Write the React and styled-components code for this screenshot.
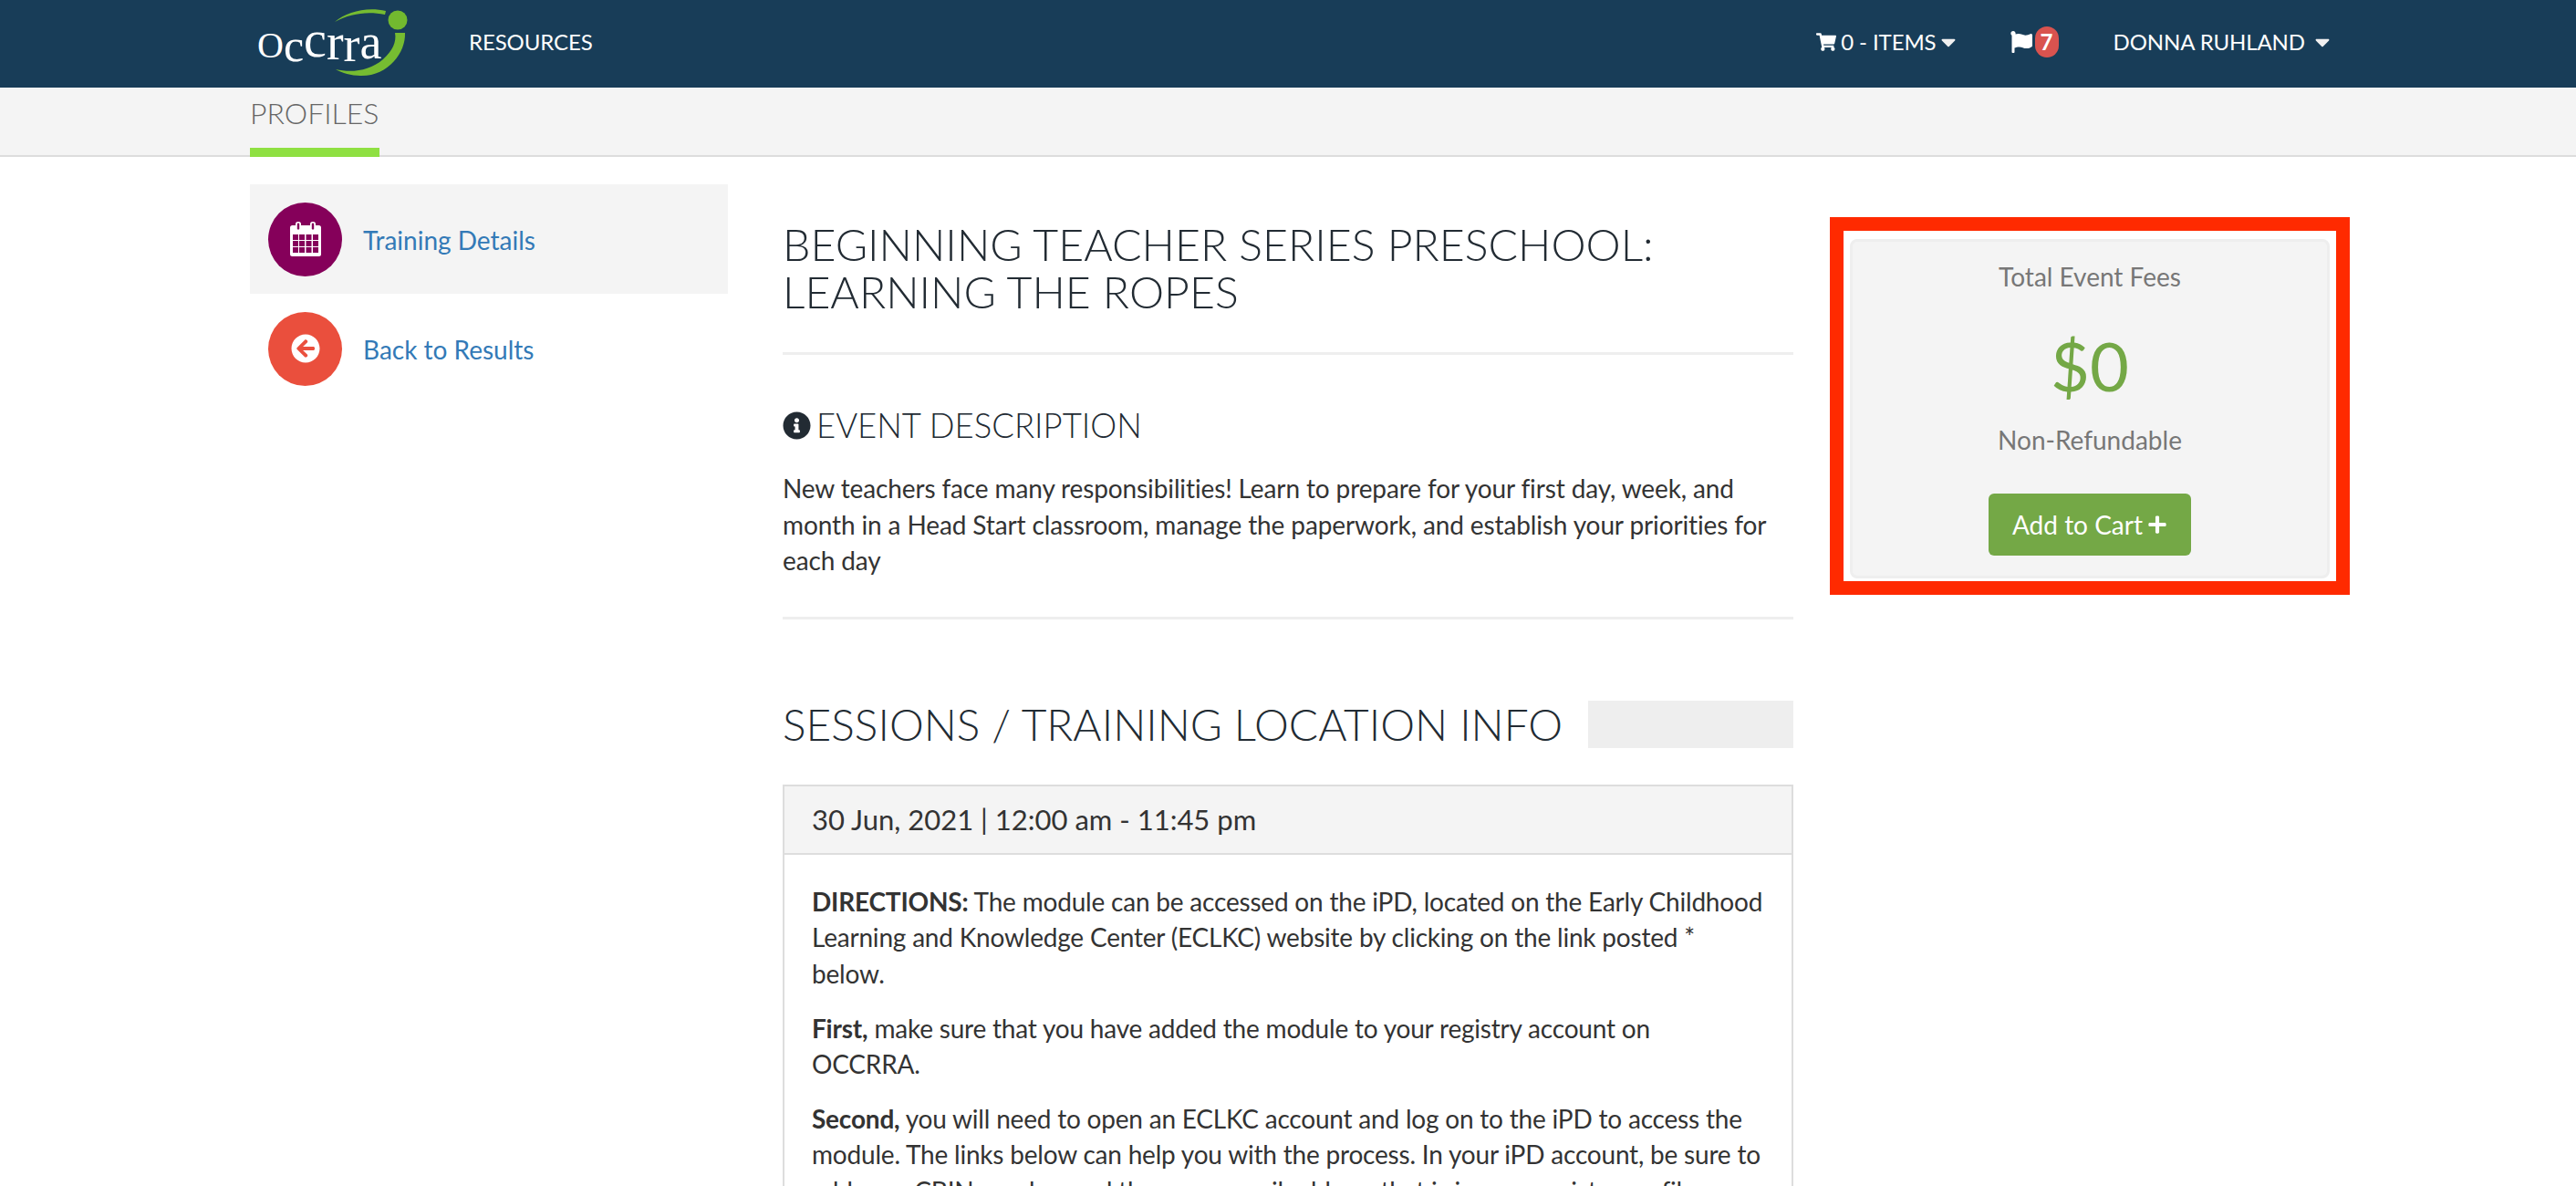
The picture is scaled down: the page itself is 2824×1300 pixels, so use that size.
import styled, { createGlobalStyle } from 'styled-components';
import { FaShoppingCart, FaFlag, FaCaretDown, FaArrowCircleLeft, FaInfoCircle, FaPlus } from 'react-icons/fa';

const GlobalStyle = createGlobalStyle`
  html, body {
    margin: 0;
    background: #fff;
    font-family: Lato, "Open Sans", sans-serif;
    color: #333;
  }
  * { box-sizing: border-box; }
`;

const Page = styled.div`
  height: 1300px;
  overflow: hidden;
`;

const TopBar = styled.header`
  height: 96px;
  background: #183d58;
  color: #fff;
  display: flex;
  align-items: center;
  padding: 0 270px 5px 280px;
`;
const Logo = styled.div`
  position: relative;
  width: 168px;
  height: 80px;
  margin-top: 5px;
  flex: none;
  svg { position: absolute; left: 0; top: 0; }
`;
const LogoText = styled.span`
  position: absolute;
  left: 2px;
  top: 0;
  line-height: 72px;
  white-space: nowrap;
  font-family: "Liberation Serif", serif;
  color: #fff;
`;
const LogoLetter = styled.span`
  display: inline-block;
  font-size: ${(p) => p.$size}px;
  transform: translateY(${(p) => p.$drop}px);
`;
const TopLink = styled.a`
  font-size: 24px;
  letter-spacing: -0.1px;
  color: #fff;
  display: flex;
  align-items: center;
  white-space: nowrap;
`;
const Resources = styled(TopLink)`
  margin-left: 66px;
  margin-right: auto;
`;
const Cart = styled(TopLink)`
  svg { flex: none; }
`;
const CartIcon = styled(FaShoppingCart)`
  margin-right: 5px;
`;
const Caret = styled(FaCaretDown)`
  width: 16px;
  height: 26px;
  margin-left: ${(p) => p.$gap}px;
  color: #f0f0f0;
`;
const Flags = styled.div`
  display: flex;
  align-items: center;
  gap: 3px;
  margin-left: 60px;
`;
const Badge = styled.span`
  width: 26px;
  height: 34px;
  border-radius: 13px;
  background: #d9534f;
  color: #fff;
  font-size: 24px;
  font-weight: 700;
  display: flex;
  align-items: center;
  justify-content: center;
`;
const User = styled(TopLink)`
  margin-left: 60px;
`;

const SubBar = styled.div`
  height: 76px;
  background: #f4f4f4;
  border-bottom: 2px solid #ddd;
  padding-left: 274px;
`;
const SubTab = styled.div`
  width: 142px;
  height: 76px;
  border-bottom: 10px solid #8fe042;
  font-size: 32px;
  font-weight: 300;
  color: #666;
  line-height: 56px;
  white-space: nowrap;
`;

const Layout = styled.div`
  display: flex;
  align-items: flex-start;
  padding: 30px 0 0 274px;
`;
const Sidebar = styled.nav`
  width: 524px;
  flex: none;
`;
const SideItem = styled.a`
  height: 120px;
  display: flex;
  align-items: center;
  gap: 23px;
  padding-left: 20px;
  background: ${(p) => (p.$active ? '#f4f4f4' : 'transparent')};
  color: #337ab7;
  font-size: 28px;
`;
const SideLabel = styled.span`
  padding-top: 2px;
`;
const SideIcon = styled.span`
  width: 81px;
  height: 81px;
  border-radius: 50%;
  background: ${(p) => p.$color};
  color: #fff;
  display: flex;
  align-items: center;
  justify-content: center;
  flex: none;
`;

const Main = styled.main`
  width: 1108px;
  margin-left: 60px;
  flex: none;
`;
const Title = styled.h1`
  margin: 39px 0 0;
  font-size: 48.2px;
  font-weight: 300;
  line-height: 52px;
  color: #222b33;
  padding-bottom: 41px;
  border-bottom: 3px solid #eee;
`;
const SectionTitle = styled.h2`
  margin: 55px 0 0;
  font-size: 36.5px;
  font-weight: 300;
  line-height: 44px;
  color: #222b33;
  display: flex;
  align-items: center;
  gap: 6px;
`;
const Text = styled.p`
  margin: 0 0 20px;
  font-size: 28px;
  line-height: 39.6px;
  letter-spacing: -0.12px;
  color: #333;
`;
const Description = styled(Text)`
  margin: 28px 0 0;
  padding-bottom: 41px;
  border-bottom: 3px solid #eee;
`;
const SessionsRow = styled.div`
  display: flex;
  align-items: center;
  justify-content: space-between;
  margin-top: 89px;
  height: 52px;
`;
const SessionsTitle = styled.h2`
  margin: 0;
  font-size: 47.8px;
  font-weight: 300;
  color: #222b33;
  white-space: nowrap;
`;
const SearchStub = styled.div`
  width: 225px;
  height: 52px;
  background: #eee;
`;
const Panel = styled.section`
  margin-top: 40px;
  border: 2px solid #ddd;
  height: 600px;
`;
const PanelHead = styled.div`
  height: 75px;
  background: #f4f4f4;
  border-bottom: 2px solid #ddd;
  padding-left: 30px;
  display: flex;
  align-items: center;
  font-size: 31px;
  color: #333;
`;
const PanelBody = styled.div`
  padding: 32px 14px 32px 30px;
  ${Text} {
    letter-spacing: -0.2px;
  }
`;

const Summary = styled.div`
  margin-left: 40px;
  margin-top: 36px;
  width: 570px;
  flex: none;
  border: 15px solid #ff2a00;
  padding: 9px 7px 3px;
`;
const SummaryCard = styled.div`
  height: 372px;
  background: #f4f4f4;
  border: 3px solid #eee;
  border-radius: 8px;
  display: flex;
  flex-direction: column;
  align-items: center;
  color: #777;
  font-size: 28px;
`;
const FeeLabel = styled.div`
  margin-top: 18px;
  line-height: 40px;
`;
const Amount = styled.div`
  margin-top: 33px;
  font-size: 74px;
  line-height: 90px;
  color: #74a846;
`;
const FeeNote = styled.div`
  margin-top: 16px;
  line-height: 40px;
`;
const CartButton = styled.button`
  margin-top: 39px;
  width: 222px;
  height: 68px;
  border: 0;
  border-radius: 6px;
  background: #74a846;
  color: #fff;
  font-family: inherit;
  font-size: 28px;
  display: flex;
  align-items: center;
  justify-content: center;
  gap: 5px;
`;

const LogoMark = () => (
  <svg width="168" height="80" viewBox="0 0 168 80">
    <path d="M87 16 C100 5 122 -1 143 4 L142 8 C122 4 104 7 87 16 Z" fill="#76bc31" />
    <circle cx="156" cy="14" r="10.5" fill="#72b92f" />
    <path d="M153 28 L164 28 C165 50 145 76 115 75 C105 75 95 72 88 68 C105 72 125 70 140 57 C150 48 155 38 153 28 Z" fill="#76bc31" />
  </svg>
);

const CalendarIcon = () => (
  <svg width="34" height="38" viewBox="0 0 34 38" fill="#85005a">
    <rect x="0" y="4" width="34" height="34" rx="2.5" fill="#fff" />
    <rect x="6" y="0" width="6" height="10" rx="2.5" fill="#fff" />
    <rect x="22" y="0" width="6" height="10" rx="2.5" fill="#fff" />
    <rect x="7.8" y="1.6" width="2.4" height="7" rx="1.2" />
    <rect x="23.8" y="1.6" width="2.4" height="7" rx="1.2" />
    {[14, 21, 28].map((y) =>
      [3, 10, 17.5, 25].map((x) => <rect key={`${x}-${y}`} x={x} y={y} width="6" height="6" />)
    )}
  </svg>
);

export default function App() {
  return (
    <Page>
      <GlobalStyle />
      <TopBar>
        <Logo>
          <LogoMark />
          <LogoText>
            <LogoLetter $size={40} $drop={0}>O</LogoLetter>
            <LogoLetter $size={50} $drop={4}>c</LogoLetter>
            <LogoLetter $size={56} $drop={-1}>c</LogoLetter>
            <LogoLetter $size={56} $drop={2}>r</LogoLetter>
            <LogoLetter $size={54} $drop={4}>r</LogoLetter>
            <LogoLetter $size={54} $drop={1}>a</LogoLetter>
          </LogoText>
        </Logo>
        <Resources>RESOURCES</Resources>
        <Cart><CartIcon size={22} />0 - ITEMS<Caret $gap={5} /></Cart>
        <Flags><FaFlag size={24} /><Badge>7</Badge></Flags>
        <User>DONNA RUHLAND<Caret $gap={11} /></User>
      </TopBar>
      <SubBar>
        <SubTab>PROFILES</SubTab>
      </SubBar>
      <Layout>
        <Sidebar>
          <SideItem $active>
            <SideIcon $color="#85005a"><CalendarIcon /></SideIcon>
            <SideLabel>Training Details</SideLabel>
          </SideItem>
          <SideItem>
            <SideIcon $color="#ea4f3d"><FaArrowCircleLeft size={32} /></SideIcon>
            <SideLabel>Back to Results</SideLabel>
          </SideItem>
        </Sidebar>
        <Main>
          <Title>BEGINNING TEACHER SERIES PRESCHOOL:<br />LEARNING THE ROPES</Title>
          <SectionTitle><FaInfoCircle size={31} />EVENT DESCRIPTION</SectionTitle>
          <Description>New teachers face many responsibilities! Learn to prepare for your first day, week, and month in a Head Start classroom, manage the paperwork, and establish your priorities for each day</Description>
          <SessionsRow>
            <SessionsTitle>SESSIONS / TRAINING LOCATION INFO</SessionsTitle>
            <SearchStub />
          </SessionsRow>
          <Panel>
            <PanelHead>30 Jun, 2021 | 12:00 am - 11:45 pm</PanelHead>
            <PanelBody>
              <Text><strong>DIRECTIONS:</strong> The module can be accessed on the iPD, located on the Early Childhood Learning and Knowledge Center (ECLKC) website by clicking on the link posted *<br />below.</Text>
              <Text><strong>First,</strong> make sure that you have added the module to your registry account on<br />OCCRRA.</Text>
              <Text><strong>Second,</strong> you will need to open an ECLKC account and log on to the iPD to access the module. The links below can help you with the process. In your iPD account, be sure to add your CBIN number and the same email address that is in your registry profile</Text>
            </PanelBody>
          </Panel>
        </Main>
        <Summary>
          <SummaryCard>
            <FeeLabel>Total Event Fees</FeeLabel>
            <Amount>$0</Amount>
            <FeeNote>Non-Refundable</FeeNote>
            <CartButton>Add to Cart<FaPlus size={22} /></CartButton>
          </SummaryCard>
        </Summary>
      </Layout>
    </Page>
  );
}
